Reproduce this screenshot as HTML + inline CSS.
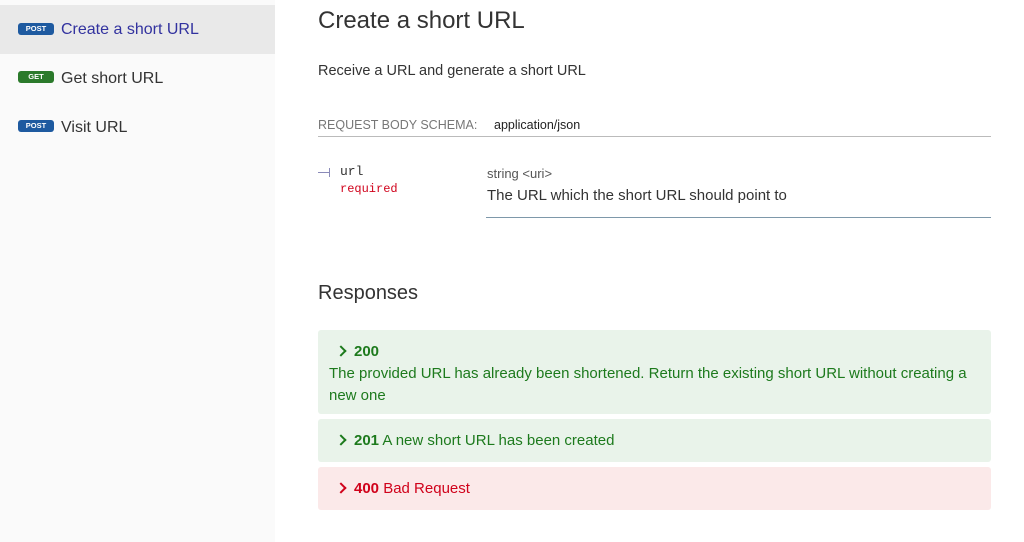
<!DOCTYPE html>
<html><head><meta charset="utf-8"><style>
*{margin:0;padding:0;box-sizing:border-box}
body{width:1024px;height:542px;overflow:hidden;background:#fff;font-family:"Liberation Sans",sans-serif;position:relative}
.side{position:absolute;left:0;top:0;width:275px;height:542px;background:#fafafa}
.item{position:absolute;left:0;width:275px;height:49px;font-size:16px;color:#333}
.item.act{background:#e9e9e9;color:#32329f}
.badge{position:absolute;left:18px;width:36px;height:12px;border-radius:3px;color:#fff;font-size:7.5px;font-weight:bold;text-align:center;line-height:12px}
.post{background:#1e5aa0}.get{background:#2b7a2b}
.item span.t{position:absolute;left:61px}
.a{position:absolute}
.resp{position:absolute;left:318px;width:673px;border-radius:3px}
.g{background:#e9f3ea;color:#1d7a1d}
.r{background:#fbe9e9;color:#d0021b}
.resp b{font-weight:bold}
.chev{display:inline-block;width:8px;height:8px;border-right:2px solid currentColor;border-bottom:2px solid currentColor;transform:rotate(-45deg);margin-right:9px;position:relative;top:-1px}
</style></head><body>
<div class="side">
 <div class="item act" style="top:5px"><div class="badge post" style="top:18px">POST</div><span class="t" style="top:16px">Create a short URL</span></div>
 <div class="item" style="top:54px"><div class="badge get" style="top:17px">GET</div><span class="t" style="top:16px">Get short URL</span></div>
 <div class="item" style="top:103px"><div class="badge post" style="top:17px">POST</div><span class="t" style="top:16px">Visit URL</span></div>
</div>
<div class="a" style="left:318px;top:7px;font-size:24px;color:#333">Create a short URL</div>
<div class="a" style="left:318px;top:63px;font-size:14.5px;color:#333">Receive a URL and generate a short URL</div>
<div class="a" style="left:318px;top:118px;font-size:12.5px;color:#777">REQUEST BODY SCHEMA:</div>
<div class="a" style="left:494px;top:118px;font-size:12.5px;color:#222">application/json</div>
<div class="a" style="left:318px;top:136px;width:673px;height:1px;background:#bbb"></div>
<div class="a" style="left:318px;top:172px;width:11px;height:1px;background:#8a8ab8"></div>
<div class="a" style="left:329px;top:168px;width:1px;height:9px;background:#8a8ab8"></div>
<div class="a" style="left:340px;top:164px;font-family:'Liberation Mono',monospace;font-size:13px;color:#333">url</div>
<div class="a" style="left:340px;top:182px;font-family:'Liberation Mono',monospace;font-size:12px;color:#d0021b">required</div>
<div class="a" style="left:487px;top:166px;font-size:13px;color:#555">string &lt;uri&gt;</div>
<div class="a" style="left:487px;top:187px;font-size:15px;color:#333">The URL which the short URL should point to</div>
<div class="a" style="left:486px;top:217px;width:505px;height:1px;background:#7e98aa"></div>
<div class="a" style="left:318px;top:282px;font-size:20px;color:#333">Responses</div>
<div class="resp g" style="top:330px;height:84px;padding:11px 14px 0 11px;font-size:15px;line-height:22px"><div style="padding-left:8px;font-size:15px"><span class="chev"></span><b>200</b></div>The provided URL has already been shortened. Return the existing short URL without creating a new one</div>
<div class="resp g" style="top:419px;height:43px;padding:11px 19px;font-size:15px;line-height:22px"><span class="chev"></span><b>201</b> A new short URL has been created</div>
<div class="resp r" style="top:467px;height:43px;padding:11px 19px;font-size:15px;line-height:22px"><span class="chev"></span><b>400</b> Bad Request</div>
</body></html>
